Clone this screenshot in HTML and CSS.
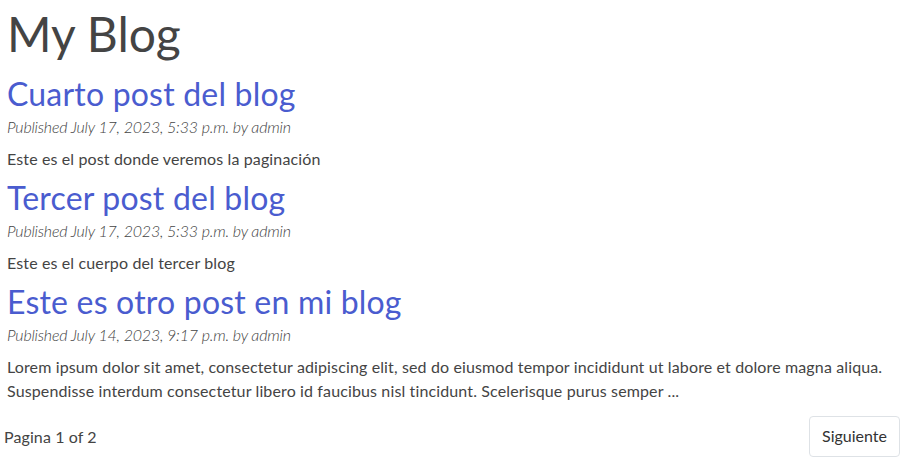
FILE: index.html
```html
<!DOCTYPE html>
<html lang="es">
<head>
<meta charset="utf-8">
<title>My Blog</title>
<link rel="stylesheet" href="styles.css">
</head>
<body>
<main class="page">
  <h1 class="site-title">My Blog</h1>
  <article class="post">
    <h2 class="post-title"><a href="#">Cuarto post del blog</a></h2>
    <p class="post-meta">Published July 17, 2023, 5:33 p.m. by admin</p>
    <p class="post-body">Este es el post donde veremos la paginación</p>
  </article>
  <article class="post">
    <h2 class="post-title"><a href="#">Tercer post del blog</a></h2>
    <p class="post-meta">Published July 17, 2023, 5:33 p.m. by admin</p>
    <p class="post-body">Este es el cuerpo del tercer blog</p>
  </article>
  <article class="post">
    <h2 class="post-title"><a href="#">Este es otro post en mi blog</a></h2>
    <p class="post-meta">Published July 14, 2023, 9:17 p.m. by admin</p>
    <p class="post-body">Lorem ipsum dolor sit amet, consectetur adipiscing elit, sed do eiusmod tempor incididunt ut labore et dolore magna aliqua. Suspendisse interdum consectetur libero id faucibus nisl tincidunt. Scelerisque purus semper ...</p>
  </article>
</main>
<nav class="pagination">
  <span class="page-info">Pagina 1 of 2</span>
  <a class="page-btn" href="#">Siguiente</a>
</nav>
</body>
</html>
```

FILE: styles.css
```css
html, body {
  margin: 0;
  padding: 0;
  background: #fff;
}
body {
  font-family: Lato, "Noto Sans", sans-serif;
  font-size: 16px;
  line-height: 24px;
  color: #444;
}
.page {
  padding: 5px 8px 0 7px;
}
.site-title {
  margin: 0 0 12px 0;
  font-size: 48px;
  line-height: 58px;
  font-weight: 400;
  color: #444;
}
.post-title {
  margin: 0 0 2px 0;
  font-size: 32px;
  line-height: 38px;
  font-weight: 400;
  letter-spacing: 0.2px;
}
.post-title a {
  color: #4a5ccf;
  text-decoration: none;
}
.post-meta {
  margin: 0 0 8px 0;
  font-style: italic;
  font-weight: 300;
  color: #444;
  letter-spacing: -0.2px;
}
.post-body {
  margin: 0 0 8px 0;
  letter-spacing: 0.13px;
}
.pagination {
  display: flex;
  justify-content: space-between;
  align-items: center;
  padding: 5px 5px 0 4px;
}
.page-info {
  letter-spacing: 0.1px;
}
.page-btn {
  display: inline-block;
  padding: 7px 12px 8px;
  border: 1px solid #dee2e6;
  border-radius: 4px;
  color: #333;
  text-decoration: none;
}
```
